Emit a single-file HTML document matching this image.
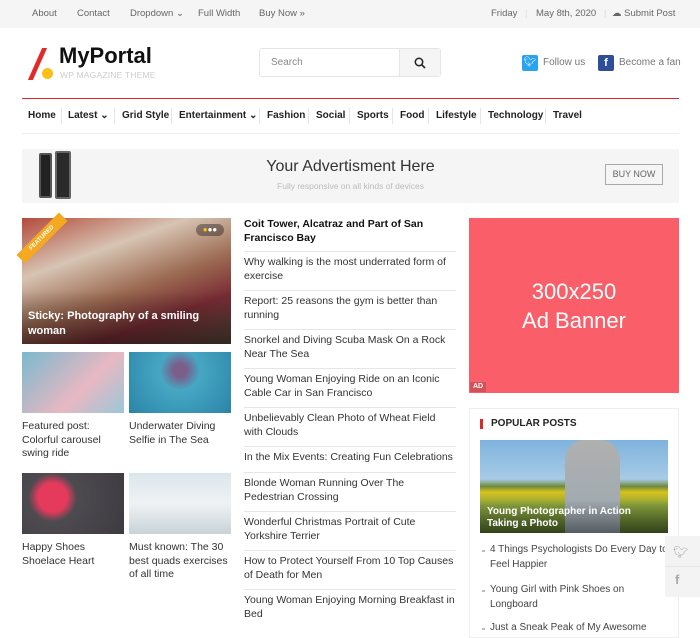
<!DOCTYPE html>
<html><head><meta charset="utf-8"><style>
*{margin:0;padding:0;box-sizing:border-box}
body{width:700px;height:630px;overflow:hidden;background:#fff;font-family:"Liberation Sans",sans-serif;position:relative;color:#222}
.a{position:absolute}
.top{left:0;top:0;width:700px;height:28px;background:#f5f5f5;font-size:9.5px;color:#666}
.top span{position:absolute;top:8px}
.nav span{position:absolute;top:110px;font-size:10px;font-weight:bold;color:#222}
.sep{position:absolute;top:108px;width:1px;height:16px;background:#e5e5e5}
.ml{position:absolute;left:244px;width:212px;font-size:10.5px;line-height:13.5px;color:#333}
.hr{position:absolute;left:244px;width:212px;height:1px;background:#e6e6e6}
.cap{position:absolute;font-size:10.5px;line-height:13.5px;color:#333}
.pl{position:absolute;left:490px;width:178px;font-size:10px;line-height:14.5px;color:#444}
.pl:before{content:"";position:absolute;left:-8px;top:7px;width:3px;height:2px;background:#bbb}
</style></head><body>
<div class="a top">
<span style="left:32px">About</span><span style="left:77px">Contact</span><span style="left:130px">Dropdown ⌄</span><span style="left:198px">Full Width</span><span style="left:259px">Buy Now »</span>
<span style="left:491px">Friday</span><span style="left:525px;color:#ddd">|</span><span style="left:536px">May 8th, 2020</span><span style="left:604px;color:#ddd">|</span><span style="left:612px">☁ Submit Post</span>
</div>
<!-- logo -->
<div class="a" style="left:35px;top:48px;width:5px;height:32px;background:#e32a2a;transform:skewX(-24deg)"></div>
<div class="a" style="left:42px;top:68px;width:11px;height:11px;border-radius:50%;background:#fbbf18"></div>
<div class="a" style="left:59px;top:43px;font-size:22px;font-weight:bold;color:#111">MyPortal</div>
<div class="a" style="left:60px;top:70px;font-size:8.5px;color:#ccc;letter-spacing:.2px">WP MAGAZINE THEME</div>
<!-- search -->
<div class="a" style="left:259px;top:48px;width:182px;height:29px;border:1px solid #e5e5e5;border-radius:3px"></div>
<div class="a" style="left:399px;top:49px;width:41px;height:27px;background:#f5f5f5;border-left:1px solid #e5e5e5"></div>
<div class="a" style="left:271px;top:57px;font-size:10px;color:#888">Search</div>
<svg class="a" style="left:414px;top:57px" width="12" height="12" viewBox="0 0 12 12"><circle cx="5" cy="5" r="3.7" fill="none" stroke="#222" stroke-width="1.5"/><path d="M7.7 7.7L11 11" stroke="#222" stroke-width="1.6"/></svg>
<div class="a" style="left:522px;top:55px;width:16px;height:16px;background:#2aa3ef;border-radius:2px;color:#fff;font-size:10px;text-align:center;line-height:16px">🐦︎</div>
<div class="a" style="left:543px;top:57px;font-size:10px;color:#777">Follow us</div>
<div class="a" style="left:598px;top:55px;width:16px;height:16px;background:#2e4f95;border-radius:2px;color:#fff;font-size:11px;font-weight:bold;text-align:center;line-height:17px">f</div>
<div class="a" style="left:619px;top:57px;font-size:10px;color:#777">Become a fan</div>
<div class="a" style="left:22px;top:98px;width:657px;height:1px;background:#e02626"></div>
<div class="nav">
<span style="left:28px">Home</span><span style="left:68px">Latest ⌄</span><span style="left:122px">Grid Style</span><span style="left:179px">Entertainment ⌄</span><span style="left:267px">Fashion</span><span style="left:316px">Social</span><span style="left:357px">Sports</span><span style="left:400px">Food</span><span style="left:436px">Lifestyle</span><span style="left:488px">Technology</span><span style="left:553px">Travel</span>
</div>
<div class="sep" style="left:61px"></div><div class="sep" style="left:114px"></div><div class="sep" style="left:171px"></div><div class="sep" style="left:259px"></div><div class="sep" style="left:308px"></div><div class="sep" style="left:349px"></div><div class="sep" style="left:392px"></div><div class="sep" style="left:428px"></div><div class="sep" style="left:480px"></div><div class="sep" style="left:545px"></div>
<div class="a" style="left:22px;top:133px;width:657px;height:1px;background:#eee"></div>
<!-- ad banner -->
<div class="a" style="left:22px;top:149px;width:657px;height:54px;background:#f5f5f5"></div>
<div class="a" style="left:39px;top:153px;width:13px;height:45px;background:#222;border-radius:2px;border:2px solid #555"></div>
<div class="a" style="left:55px;top:151px;width:16px;height:48px;background:#2a2a2a;border-radius:2px;border:2px solid #666"></div>
<div class="a" style="left:22px;top:158px;width:657px;text-align:center;font-size:16px;color:#333">Your Advertisment Here</div>
<div class="a" style="left:22px;top:181px;width:657px;text-align:center;font-size:8.5px;color:#bbb">Fully responsive on all kinds of devices</div>
<div class="a" style="left:605px;top:164px;width:58px;height:21px;border:1px solid #aaa;font-size:9px;color:#666;text-align:center;line-height:19px">BUY NOW</div>
<!-- left -->
<div class="a" style="left:22px;top:218px;width:209px;height:126px;background:linear-gradient(160deg,#b44a3b 0%,#d7c4b3 30%,#9c6b52 55%,#7a2d35 75%,#5a4a3c 100%)"></div>
<div class="a" style="left:22px;top:290px;width:209px;height:54px;background:linear-gradient(rgba(0,0,0,0),rgba(0,0,0,.45))"></div>
<div class="a" style="left:12px;top:232px;width:60px;height:12px;background:#f4a921;transform:rotate(-45deg);font-size:6px;color:#fff;text-align:center;line-height:12px;font-weight:bold">FEATURED</div>
<div class="a" style="left:196px;top:224px;width:28px;height:12px;background:rgba(0,0,0,.35);border-radius:6px;font-size:8px;color:#fff;text-align:center;line-height:11px"><span style="color:#f4c21a">●</span>●●</div>
<div class="a" style="left:28px;top:309px;width:190px;font-size:11px;font-weight:bold;color:#fff;line-height:14.5px">Sticky: Photography of a smiling woman</div>
<div class="a" style="left:22px;top:352px;width:102px;height:61px;background:linear-gradient(135deg,#7ab9cf,#e7b8c2 60%,#9bc7d8)"></div>
<div class="a" style="left:129px;top:352px;width:102px;height:61px;background:radial-gradient(circle at 50% 30%,#7a5f8a 10%,#46a7c4 30%,#2b84a7 100%)"></div>
<div class="cap" style="left:22px;top:420px;width:102px">Featured post: Colorful carousel swing ride</div>
<div class="cap" style="left:129px;top:420px;width:102px">Underwater Diving Selfie in The Sea</div>
<div class="a" style="left:22px;top:473px;width:102px;height:61px;background:radial-gradient(circle at 30% 40%,#e63a5c 18%,#4d4b50 30%,#3d3b40)"></div>
<div class="a" style="left:129px;top:473px;width:102px;height:61px;background:linear-gradient(#dbe6ec,#eef2f4 50%,#c8d3d8)"></div>
<div class="cap" style="left:22px;top:541px;width:102px">Happy Shoes Shoelace Heart</div>
<div class="cap" style="left:129px;top:541px;width:102px">Must known: The 30 best quads exercises of all time</div>
<!-- middle -->
<div class="ml" style="top:218px;font-weight:bold;color:#111">Coit Tower, Alcatraz and Part of San Francisco Bay</div>
<div class="hr" style="top:251px"></div>
<div class="ml" style="top:256px">Why walking is the most underrated form of exercise</div>
<div class="hr" style="top:290px"></div>
<div class="ml" style="top:295px">Report: 25 reasons the gym is better than running</div>
<div class="hr" style="top:329px"></div>
<div class="ml" style="top:334px">Snorkel and Diving Scuba Mask On a Rock Near The Sea</div>
<div class="hr" style="top:368px"></div>
<div class="ml" style="top:373px">Young Woman Enjoying Ride on an Iconic Cable Car in San Francisco</div>
<div class="hr" style="top:407px"></div>
<div class="ml" style="top:412px">Unbelievably Clean Photo of Wheat Field with Clouds</div>
<div class="hr" style="top:446px"></div>
<div class="ml" style="top:451px">In the Mix Events: Creating Fun Celebrations</div>
<div class="hr" style="top:472px"></div>
<div class="ml" style="top:477px">Blonde Woman Running Over The Pedestrian Crossing</div>
<div class="hr" style="top:511px"></div>
<div class="ml" style="top:516px">Wonderful Christmas Portrait of Cute Yorkshire Terrier</div>
<div class="hr" style="top:550px"></div>
<div class="ml" style="top:555px">How to Protect Yourself From 10 Top Causes of Death for Men</div>
<div class="hr" style="top:589px"></div>
<div class="ml" style="top:594px">Young Woman Enjoying Morning Breakfast in Bed</div>
<!-- right -->
<div class="a" style="left:469px;top:218px;width:210px;height:175px;background:#fa5f69"></div>
<div class="a" style="left:469px;top:277px;width:210px;text-align:center;font-size:22px;line-height:29px;color:#fff">300x250<br>Ad Banner</div>
<div class="a" style="left:470px;top:382px;width:16px;height:10px;background:rgba(0,0,0,.15);font-size:7px;color:#fff;font-weight:bold;text-align:center;line-height:10px">AD</div>
<div class="a" style="left:469px;top:408px;width:210px;height:230px;border:1px solid #eee"></div>
<div class="a" style="left:480px;top:419px;width:3px;height:10px;background:#e02626"></div>
<div class="a" style="left:491px;top:418px;font-size:10px;font-weight:bold;color:#222">POPULAR POSTS</div>
<div class="a" style="left:480px;top:440px;width:188px;height:93px;background:linear-gradient(#7fb3dc 0%,#a6cbe6 42%,#6e8a3c 50%,#d8c21e 56%,#8aa33d 70%,#5a7a30 100%)"></div>
<div class="a" style="left:565px;top:440px;width:55px;height:93px;background:linear-gradient(#b0b0b0,#9aa8b0);border-radius:20px 20px 0 0"></div>
<div class="a" style="left:480px;top:500px;width:188px;height:33px;background:linear-gradient(rgba(0,0,0,0),rgba(0,0,0,.45))"></div>
<div class="a" style="left:487px;top:506px;width:178px;font-size:10px;font-weight:bold;color:#fff;line-height:11.5px">Young Photographer in Action Taking a Photo</div>
<div class="pl" style="top:543px">4 Things Psychologists Do Every Day to Feel Happier</div>
<div class="pl" style="top:583px">Young Girl with Pink Shoes on Longboard</div>
<div class="pl" style="top:621px">Just a Sneak Peak of My Awesome</div>
<!-- share float -->
<div class="a" style="left:665px;top:536px;width:35px;height:61px;background:#f3f3f3"></div>
<div class="a" style="left:665px;top:566px;width:35px;height:1px;background:#e5e5e5"></div>
<div class="a" style="left:673px;top:545px;font-size:12px;color:#aaa">🐦︎</div>
<div class="a" style="left:675px;top:572px;font-size:13px;font-weight:bold;color:#aaa">f</div>
</body></html>
